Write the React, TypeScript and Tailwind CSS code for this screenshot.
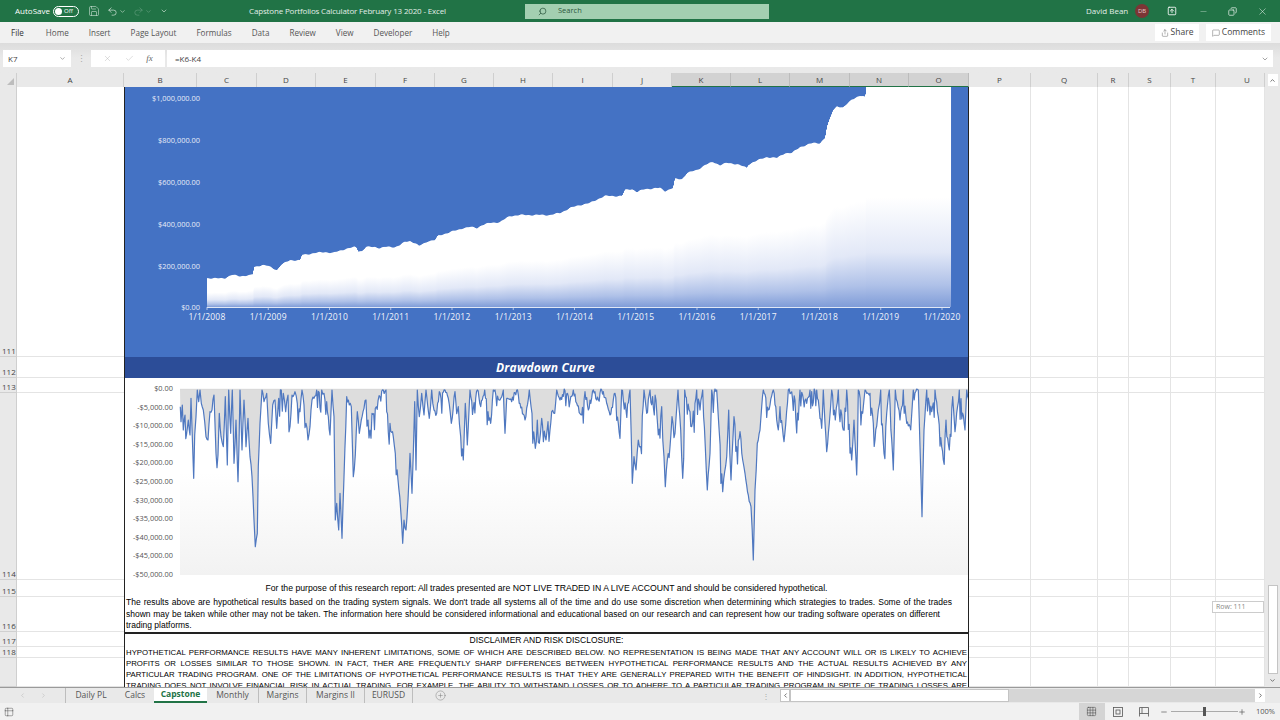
import React from 'react';
import { Save, Undo2, Redo2, ChevronDown, Search, X, Check, Minus, Plus, Share, MessageSquare, Grid3x3, CirclePlus, ChevronLeft, ChevronRight, ChevronUp, Copy, SquareArrowUp, Table2 } from 'lucide-react';

const uiFont = 'font-["Open_Sans","Liberation_Sans",sans-serif]';

const columns = [
  { name: 'A', w: 'w-[107px]' }, { name: 'B', w: 'w-[73px]' }, { name: 'C', w: 'w-[60px]' }, { name: 'D', w: 'w-[59px]' },
  { name: 'E', w: 'w-[60px]' }, { name: 'F', w: 'w-[59px]' }, { name: 'G', w: 'w-[59px]' }, { name: 'H', w: 'w-[59px]' },
  { name: 'I', w: 'w-[60px]' }, { name: 'J', w: 'w-[59px]' }, { name: 'K', w: 'w-[59px]', on: true }, { name: 'L', w: 'w-[59px]', on: true },
  { name: 'M', w: 'w-[60px]', on: true }, { name: 'N', w: 'w-[59px]', on: true }, { name: 'O', w: 'w-[60px]', on: true },
  { name: 'P', w: 'w-[62px]' }, { name: 'Q', w: 'w-[67px]' }, { name: 'R', w: 'w-[31px]' }, { name: 'S', w: 'w-[42px]' },
  { name: 'T', w: 'w-[45px]' }, { name: 'U', w: 'w-[49px] pl-[14px]' },
];

const rows = [
  { label: '111', h: 'h-[270px]' }, { label: '112', h: 'h-[21px]' }, { label: '113', h: 'h-[15px]' }, { label: '114', h: 'h-[187px]' },
  { label: '115', h: 'h-[17px]' }, { label: '116', h: 'h-[35px]' }, { label: '117', h: 'h-[15px]' }, { label: '118', h: 'h-[11px]' },
  { label: '', h: 'h-[29px]' },
];

const rightCols = columns.slice(15);

// equity curve outline, screen coordinates
const equity: [number, number][] = [
  [207, 278], [215, 278.5], [225, 278], [232, 275], [240, 276], [250, 275.5], [253, 274], [254, 267], [262, 265], [268, 266], [277, 270], [281, 265],
  [290, 260], [300, 260.5], [302, 255], [315, 253], [325, 252], [333, 253], [345, 249], [355, 247], [357, 248], [358, 251], [362, 251], [366, 247],
  [375, 247], [380, 248], [385, 247], [395, 247], [400, 245], [405, 242], [410, 241], [415, 243], [419, 246], [425, 243], [428, 241], [435, 240],
  [438, 236], [450, 232], [458, 230], [463, 228], [470, 227], [477, 228], [482, 225], [490, 223], [500, 222], [505, 219], [510, 216], [520, 215],
  [550, 215], [560, 213], [570, 208], [580, 205], [590, 203], [600, 198], [605, 196], [622, 196], [625, 190], [632, 189], [637, 192], [645, 189],
  [660, 188], [665, 191], [673, 188], [675, 179], [682, 179], [687, 173], [697, 170], [705, 165], [713, 162], [720, 165], [727, 163], [737, 164],
  [747, 168], [748, 165], [753, 162], [767, 157], [777, 158], [785, 153], [792, 153], [800, 147], [813, 143], [820, 143], [825, 138], [827, 127],
  [833, 110], [837, 106], [843, 108], [852, 99], [860, 96], [865, 97], [867, 87], [951, 87],
];

const equityAt = (x: number) => {
  for (let i = 1; i < equity.length; i++) {
    if (x <= equity[i][0]) {
      const [x0, y0] = equity[i - 1];
      const [x1, y1] = equity[i];
      const y = y0 + ((y1 - y0) * (x - x0)) / (x1 - x0);
      if (y < 90) return 87;
      // small roughness so the edge isn't perfectly smooth
      return y + 0.3 * Math.sin(x * 0.9) + 0.4 * Math.sin(x * 0.37);
    }
  }
  return 87;
};

// drawdown line, traced from the chart at 3x: left half then right half
const ddLeft = [
  181, 200, 183, 245, 187, 195, 190, 270, 195, 225, 200, 280, 205, 240, 210, 285, 213, 175, 217, 290, 221, 415, 224, 285, 228, 230, 232, 150, 236, 185, 240, 150,
  244, 190, 250, 210, 254, 245, 258, 290, 264, 300, 270, 215, 276, 210, 282, 165, 288, 340, 294, 345, 298, 220, 303, 290, 310, 320, 316, 170, 322, 375, 326, 150,
  332, 280, 337, 150, 342, 370, 348, 240, 354, 425, 360, 150, 366, 330, 372, 180, 378, 320, 384, 235, 390, 350, 396, 410, 402, 540, 406, 620, 412, 580, 415, 380,
  420, 250, 426, 150, 432, 185, 440, 160, 445, 250, 452, 310, 458, 195, 465, 180, 470, 265, 476, 175, 484, 150, 490, 160, 497, 215, 504, 165, 510, 260, 516, 165,
  525, 155, 532, 190, 540, 215, 546, 150, 552, 195, 558, 250, 564, 300, 570, 260, 576, 180, 582, 175, 590, 150, 605, 150, 612, 160, 620, 185, 630, 285, 636, 150,
  642, 230, 646, 540, 650, 490, 656, 570, 660, 460, 666, 595, 672, 410, 680, 170, 688, 195, 694, 200, 700, 410, 706, 345, 712, 215, 718, 280, 724, 240, 732, 205,
  738, 180, 744, 240, 750, 270, 756, 220, 766, 205, 780, 170, 790, 150, 798, 150, 800, 215, 810, 250, 820, 290, 826, 340, 834, 420, 842, 510, 848, 610, 852, 540,
  858, 570, 864, 480, 870, 340, 876, 460, 880, 340, 884, 185, 888, 390, 892, 150, 898, 230, 905, 160, 912, 225, 918, 150, 928, 235, 935, 150, 942, 210, 950, 220,
  958, 155, 975, 150, 985, 175, 994, 250, 1005, 155, 1015, 200, 1022, 290, 1030, 360, 1036, 190, 1042, 315, 1050, 150, 1060, 205, 1072, 150, 1082, 200, 1094, 150,
  1104, 215, 1112, 250, 1120, 150, 1140, 180, 1150, 150, 1155, 280, 1160, 175, 1175, 185, 1190, 150, 1200, 190, 1215, 240, 1228, 150, 1236, 220, 1246, 325, 1252, 240,
  1258, 310, 1265, 235, 1278, 300, 1284, 245,
];
const ddRight = [
  0, 270, 5, 215, 14, 220, 20, 150, 30, 180, 45, 152, 60, 185, 70, 150, 80, 190, 95, 225, 105, 155, 115, 210, 130, 150, 140, 180, 155, 150, 170, 190, 180, 225, 195, 160,
  205, 250, 210, 295, 215, 150, 228, 210, 240, 150, 247, 430, 252, 350, 258, 390, 265, 300, 272, 320, 282, 150, 290, 220, 300, 150, 318, 180, 325, 285, 335, 200, 342, 350,
  346, 440, 352, 360, 360, 320, 366, 230, 375, 280, 384, 150, 392, 270, 398, 415, 404, 150, 420, 215, 425, 260, 440, 150, 450, 210, 458, 150, 466, 320, 472, 450, 480, 340,
  485, 150, 500, 150, 505, 230, 518, 455, 524, 395, 530, 350, 536, 210, 543, 420, 552, 230, 560, 320, 570, 275, 578, 360, 585, 400, 595, 465, 603, 500, 610, 660, 615, 450,
  622, 310, 630, 270, 640, 150, 655, 210, 670, 150, 685, 270, 690, 200, 702, 305, 715, 150, 735, 180, 745, 240, 750, 150, 770, 190, 780, 150, 800, 150, 815, 265, 820, 150,
  830, 335, 838, 250, 845, 150, 856, 240, 865, 150, 880, 270, 890, 150, 905, 360, 912, 240, 920, 405, 925, 150, 938, 220, 945, 150, 960, 160, 975, 300, 985, 210, 992, 150,
  1002, 340, 1010, 220, 1018, 150, 1030, 390, 1036, 150, 1050, 240, 1060, 150, 1070, 250, 1082, 270, 1090, 150, 1105, 150, 1110, 320, 1116, 530, 1122, 270, 1130, 150, 1145, 215,
  1155, 150, 1165, 230, 1180, 360, 1188, 240, 1198, 330, 1208, 170, 1215, 275, 1228, 150, 1245, 270, 1250, 150, 1258, 200,
];

const ddPoints = () => {
  const raw: [number, number][] = [];
  for (let i = 0; i < ddLeft.length; i += 2) raw.push([120 + ddLeft[i] / 3, 340 + ddLeft[i + 1] / 3]);
  for (let i = 0; i < ddRight.length; i += 2) raw.push([550 + ddRight[i] / 3, 340 + ddRight[i + 1] / 3]);
  // add daily wiggle and short spikes between the traced points
  let seed = 7;
  const rnd = () => {
    seed = (seed * 16807) % 2147483647;
    return seed / 2147483647;
  };
  const pts: string[] = [];
  for (let i = 0; i < raw.length - 1; i++) {
    const [x0, y0] = raw[i];
    const [x1, y1] = raw[i + 1];
    const n = Math.max(1, Math.floor((x1 - x0) / 0.8));
    for (let j = 0; j < n; j++) {
      const t = j / n;
      let y = y0 + (y1 - y0) * t;
      if (j > 0) {
        y += (rnd() - 0.5) * 7;
        if (y < 470 && rnd() < 0.28) y += rnd() * 22;
      }
      pts.push(`${(x0 + (x1 - x0) * t).toFixed(1)},${Math.max(389, y).toFixed(1)}`);
    }
  }
  const last = raw[raw.length - 1];
  pts.push(`${last[0].toFixed(1)},${last[1].toFixed(1)}`);
  return pts.join(' ');
};

function EquityChart() {
  const xs: number[] = [];
  for (let x = 207; x < 951; x++) xs.push(x);
  const years = ['1/1/2008', '1/1/2009', '1/1/2010', '1/1/2011', '1/1/2012', '1/1/2013', '1/1/2014', '1/1/2015', '1/1/2016', '1/1/2017', '1/1/2018', '1/1/2019', '1/1/2020'];
  const money = [['$1,000,000.00', 98], ['$800,000.00', 140], ['$600,000.00', 182], ['$400,000.00', 223.5], ['$200,000.00', 265.5], ['$0.00', 307]] as const;
  return (
    <svg viewBox="125 87 843 270" className="block w-[843px] h-[270px] bg-[#4472c4]">
      <defs>
        <linearGradient id="eq" x1="0" y1="0" x2="0" y2="1">
          <stop offset="0" stopColor="#ffffff" />
          <stop offset="0.5" stopColor="#ffffff" />
          <stop offset="0.75" stopColor="#e2e8f7" />
          <stop offset="0.9" stopColor="#afc1e8" />
          <stop offset="1" stopColor="#7f9cd8" />
        </linearGradient>
      </defs>
      {xs.map((x) => {
        const y = equityAt(x + 0.5);
        return <rect key={x} x={x} y={y} width={1.02} height={307 - y} fill="url(#eq)" />;
      })}
      <line x1="207" y1="307.5" x2="950" y2="307.5" stroke="#dfe7f6" strokeWidth="1" />
      {years.map((y, i) => (
        <g key={y}>
          <line x1={207 + i * 61.25} y1="307" x2={207 + i * 61.25} y2="310" stroke="#dfe7f6" strokeWidth="0.7" />
          <text x={207 + i * 61.25} y="320" textAnchor="middle" fill="#f2f5fb" fontSize="8.5" fontFamily="Open Sans" letterSpacing="0.2">{y}</text>
        </g>
      ))}
      {money.map(([t, y]) => (
        <text key={t} x="200" y={y + 3} textAnchor="end" fill="#e6ecf8" fontSize="7.4" fontFamily="Open Sans">{t}</text>
      ))}
    </svg>
  );
}

function DrawdownChart() {
  const labels = ['$0.00', '-$5,000.00', '-$10,000.00', '-$15,000.00', '-$20,000.00', '-$25,000.00', '-$30,000.00', '-$35,000.00', '-$40,000.00', '-$45,000.00', '-$50,000.00'];
  const line = ddPoints();
  return (
    <svg viewBox="125 378 843 202" className="block w-[843px] h-[202px] bg-white">
      <defs>
        <linearGradient id="dd" x1="0" y1="0" x2="0" y2="1">
          <stop offset="0" stopColor="#ffffff" />
          <stop offset="0.45" stopColor="#ffffff" />
          <stop offset="1" stopColor="#f2f2f2" />
        </linearGradient>
      </defs>
      <rect x="180" y="389" width="788" height="186" fill="url(#dd)" />
      <polygon points={`180,389 ${line} 968,389`} fill="#dddddd" />
      <line x1="180" y1="389.3" x2="968" y2="389.3" stroke="#d6d6d6" strokeWidth="0.8" />
      <polyline points={line} fill="none" stroke="#4f78c0" strokeWidth="1.2" strokeLinejoin="round" />
      {labels.map((t, i) => (
        <text key={t} x="173" y={391 + i * 18.6} textAnchor="end" fill="#555" fontSize="7.4" fontFamily="Open Sans">{t}</text>
      ))}
    </svg>
  );
}

function TitleBar() {
  return (
    <div className={`h-[22px] bg-[#217346] flex items-center text-white text-[8px] shrink-0 ${uiFont}`}>
      <span className="ml-[15px] w-[38px]">AutoSave</span>
      <div className="w-[26px] h-[11px] rounded-full border border-white flex items-center pl-[1px] gap-[2px]">
        <div className="w-[7px] h-[7px] rounded-full bg-white" />
        <span className="text-[6px] leading-none">Off</span>
      </div>
      <Save size={12} strokeWidth={1.2} className="ml-[9px] text-[#cfe3d6]" />
      <Undo2 size={11} strokeWidth={1.4} className="ml-[7px] text-[#e4f0e8]" />
      <ChevronDown size={7} className="ml-[1px] text-[#cfe3d6]" />
      <Redo2 size={11} strokeWidth={1.2} className="ml-[7px] text-[#6ba384]" />
      <ChevronDown size={7} className="ml-[1px] text-[#6ba384]" />
      <ChevronDown size={8} className="ml-[8px] text-[#cfe3d6]" />
      <span className="ml-[81px] w-[276px] text-[#e2eee7] tracking-[-0.16px]">Capstone Portfolios Calculator February 13 2020  -  Excel</span>
      <div className="w-[244px] h-[15px] bg-[#a3cfb1] flex items-center text-[#2d5a40] text-[7.5px]">
        <Search size={9} className="ml-[13px] -scale-x-100" />
        <span className="ml-[11px]">Search</span>
      </div>
      <span className="ml-[317px] w-[44px] text-[8px] text-[#e2eee7]">David Bean</span>
      <div className="ml-[5px] w-[14px] h-[14px] rounded-full bg-[#7c3535] text-[6px] flex items-center justify-center text-[#e5caca]">DB</div>
      <SquareArrowUp size={10} className="ml-[18px]" />
      <Minus size={9} className="ml-[22px] text-[#7fb096]" />
      <Copy size={9} className="ml-[20px] -scale-x-100 text-[#e2eee7]" />
      <X size={11} strokeWidth={1.2} className="ml-[20px] text-[#e2eee7]" />
    </div>
  );
}

function RibbonTabs() {
  const tabs = ['File', 'Home', 'Insert', 'Page Layout', 'Formulas', 'Data', 'Review', 'View', 'Developer', 'Help'];
  return (
    <div className={`h-[21px] bg-[#f1f1f1] flex items-center text-[8.1px] text-[#555] shrink-0 ${uiFont}`}>
      <div className="flex gap-[20px] pl-[11px] pt-[1px]">
        {tabs.map((t) => (
          <span key={t} className={t === 'File' ? 'text-[#333] mr-[2px]' : ''}>{t}</span>
        ))}
      </div>
      <div className="ml-auto flex items-center gap-[7px] pr-[9px] text-[#444] text-[8.5px]">
        <div className="w-[44px] h-[17px] bg-white flex items-center justify-center gap-[2px]">
          <Share size={8} strokeWidth={1.2} />Share
        </div>
        <div className="w-[65px] h-[17px] bg-white flex items-center justify-center gap-[2px]">
          <MessageSquare size={8} strokeWidth={1.2} />Comments
        </div>
      </div>
    </div>
  );
}

function FormulaBar() {
  return (
    <div className={`h-[30px] pt-[7px] bg-gradient-to-b from-[#dcdcdc] via-[#e9e9e9] to-[#e9e9e9] flex items-start text-[8px] text-[#444] shrink-0 ${uiFont}`}>
      <div className="ml-[3px] w-[68px] h-[17px] bg-white flex items-center justify-between px-[5px]">
        <span>K7</span>
        <ChevronDown size={7} className="text-[#777]" />
      </div>
      <div className="w-[20px] h-[17px] flex items-center justify-center text-[#aaa] text-[9px]">⋮</div>
      <div className="w-[74px] h-[17px] bg-white flex items-center justify-around px-[6px] text-[#aaa]">
        <X size={9} strokeWidth={1} />
        <Check size={9} strokeWidth={1} />
        <span className="italic text-[#666] font-['Liberation_Serif',serif] text-[9px]">fx</span>
      </div>
      <div className="ml-[2px] w-[1106px] h-[17px] bg-white flex items-center pl-[8px] justify-between pr-[4px]">
        <span>=K6-K4</span>
        <ChevronDown size={8} className="text-[#777]" />
      </div>
    </div>
  );
}

function ColumnHeader() {
  return (
    <div className={`h-[14px] flex bg-[#e9e9e9] text-[8px] text-[#444] shrink-0 ${uiFont}`}>
      <div className="w-[17px] border-r border-[#cfcfcf] flex items-end justify-end p-[2px]">
        <div className="w-0 h-0 border-l-[7px] border-l-transparent border-b-[7px] border-b-[#bdbdbd]" />
      </div>
      {columns.map((c) => (
        <div key={c.name} className={`${c.w} flex items-center justify-center border-r ${c.on ? 'bg-[#d2d2d2] border-[#bcbcbc] border-b border-b-[#217346]' : 'border-[#cfcfcf]'}`}>{c.name}</div>
      ))}
      <div className="flex-1 flex items-center justify-center">
        <div className="w-[10px] h-[12px] bg-white flex items-center justify-center"><ChevronUp size={7} strokeWidth={3} className="text-[#666]" /></div>
      </div>
    </div>
  );
}

function Report() {
  return (
    <div className="w-[845px] shrink-0 border-x border-[#222] font-['Liberation_Sans',Arial,sans-serif] text-black bg-white">
      <EquityChart />
      <div className="h-[21px] bg-[#2c4d98] flex items-center justify-center text-white text-[12px] font-bold italic font-['Open_Sans',sans-serif] tracking-[0.2px] pr-[2px]">Drawdown Curve</div>
      <DrawdownChart />
      <div className="h-[17px] flex items-center justify-center text-[8.7px]">For the purpose of this research report: All trades presented are NOT LIVE TRADED IN A LIVE ACCOUNT and should be considered hypothetical.</div>
      <div className="h-[35px] pl-[1px] pr-[16px] text-[8.5px] leading-[11.5px]">
        <div className="[text-align-last:justify]">The results above are hypothetical results based on the trading system signals. We don't trade all systems all of the time and do use some discretion when determining which strategies to trades. Some of the trades</div>
        <div className="pr-[12px] [text-align-last:justify]">shown may be taken while other may not be taken. The information here should be considered informational and educational based on our research and can represent how our trading software operates on different</div>
        <div>trading platforms.</div>
      </div>
      <div className="border-t-2 border-[#222] h-[15px] flex items-center justify-center text-[8.5px]">DISCLAIMER AND RISK DISCLOSURE:</div>
      <div className="px-[1px] text-[7.8px] leading-[11px]">
        <div className="[text-align-last:justify]">HYPOTHETICAL PERFORMANCE RESULTS HAVE MANY INHERENT LIMITATIONS, SOME OF WHICH ARE DESCRIBED BELOW.  NO REPRESENTATION IS BEING MADE THAT ANY ACCOUNT WILL OR IS LIKELY TO ACHIEVE</div>
        <div className="[text-align-last:justify]">PROFITS OR LOSSES SIMILAR TO THOSE SHOWN.  IN FACT, THER ARE FREQUENTLY SHARP DIFFERENCES BETWEEN HYPOTHETICAL PERFORMANCE RESULTS AND THE ACTUAL RESULTS ACHIEVED BY ANY</div>
        <div className="[text-align-last:justify]">PARTICULAR TRADING PROGRAM.  ONE OF THE LIMITATIONS OF HYPOTHETICAL PERFORMANCE RESULTS IS THAT THEY ARE GENERALLY PREPARED WITH THE BENEFIT OF HINDSIGHT.  IN ADDITION, HYPOTHETICAL</div>
        <div className="[text-align-last:justify]">TRADING DOES NOT INVOLVE FINANCIAL RISK IN ACTUAL TRADING.  FOR EXAMPLE, THE ABILITY TO WITHSTAND LOSSES OR TO ADHERE TO A PARTICULAR TRADING PROGRAM IN SPITE OF TRADING LOSSES ARE</div>
      </div>
    </div>
  );
}

function Sheet() {
  return (
    <div className="h-[600px] shrink-0 flex overflow-hidden relative bg-white">
      <div className={`w-[17px] shrink-0 bg-[#e9e9e9] border-r border-[#cfcfcf] text-[8px] text-[#444] ${uiFont}`}>
        {rows.map((r, i) => (
          <div key={i} className={`${r.h} flex items-end pl-[2px] border-b border-[#d0d0d0] leading-[11px]`}>{r.label}</div>
        ))}
      </div>
      <div className="w-[107px] shrink-0">
        {rows.map((r, i) => (
          <div key={i} className={`${r.h} border-b border-[#e4e4e4]`} />
        ))}
      </div>
      <Report />
      <div className="w-[296px] shrink-0">
        {rows.map((r, i) => (
          <div key={i} className={`${r.h} flex border-b border-[#e4e4e4]`}>
            {rightCols.map((c) => (
              <div key={c.name} className={`${c.w} border-r border-[#e4e4e4]`} />
            ))}
          </div>
        ))}
      </div>
      <div className="flex-1 bg-[#e9e9e9] flex flex-col items-center">
        <div className="flex-1" />
        <div className="w-[10px] h-[89px] bg-white border border-[#c4c4c4]" />
        <div className="h-[13px] flex items-center"><ChevronDown size={7} strokeWidth={3} className="text-[#666]" /></div>
      </div>
      <div className={`absolute left-[1212px] top-[514px] w-[52px] h-[12px] bg-white border border-[#cccccc] text-[7px] text-[#888] flex items-center pl-[3px] ${uiFont}`}>Row: 111</div>
    </div>
  );
}

function SheetTabs() {
  const tabs = [['Daily PL', 'w-[51px]'], ['Calcs', 'w-[37px]'], ['Capstone', 'w-[53px]'], ['Monthly', 'w-[52px]'], ['Margins', 'w-[48px]'], ['Margins II', 'w-[58px]'], ['EURUSD', 'w-[48px]']];
  return (
    <div className={`h-[16px] shrink-0 bg-[#e9e9e9] border-t border-[#9a9a9a] flex items-stretch text-[8.5px] text-[#555] ${uiFont}`}>
      <div className="w-[66px] flex items-center justify-center gap-[14px] text-[#bbb] border-r border-[#bdbdbd]">
        <ChevronLeft size={7} /><ChevronRight size={7} />
      </div>
      {tabs.map(([t, w]) => (
        <div key={t} className={`${w} flex items-center justify-center ${t === 'Capstone' ? 'bg-white text-[#217346] font-bold border-b-2 border-[#217346]' : t === 'Daily PL' || t === 'Calcs' ? 'border-r border-transparent' : 'border-r border-[#bdbdbd]'}`}>{t}</div>
      ))}
      <div className="ml-[22px] flex items-center"><CirclePlus size={11} strokeWidth={1} className="text-[#777]" /></div>
      <div className="ml-[316px] flex items-center text-[#aaa] text-[8px]">⋮</div>
      <div className="ml-[10px] w-[485px] flex items-center bg-[#d6d6d6] my-[1px]">
        <div className="w-[10px] h-full bg-white border border-[#c4c4c4] flex items-center justify-center"><ChevronLeft size={7} strokeWidth={3} className="text-[#666]" /></div>
        <div className="w-[219px] h-full bg-white border border-[#c4c4c4]" />
        <div className="ml-auto w-[10px] h-full bg-white flex items-center justify-center"><ChevronRight size={7} strokeWidth={3} className="text-[#666]" /></div>
      </div>
    </div>
  );
}

function PageLayoutIcon() {
  return (
    <svg width="10" height="10" viewBox="0 0 10 10" className="ml-[8px]" fill="none" stroke="#555" strokeWidth="0.8">
      <rect x="0.5" y="0.5" width="9" height="9" />
      <rect x="3" y="3" width="4" height="4" />
    </svg>
  );
}

function PageBreakIcon() {
  return (
    <svg width="10" height="10" viewBox="0 0 10 10" className="ml-[16px]" fill="none" stroke="#555" strokeWidth="0.8">
      <path d="M0.5 9.5V0.5H9.5V9.5M0.5 6.5H9.5M3 0.5V6.5" />
    </svg>
  );
}

function StatusBar() {
  return (
    <div className={`h-[17px] shrink-0 bg-[#f1f1f1] flex items-center text-[#555] ${uiFont}`}>
      <Table2 size={10} strokeWidth={1.2} className="ml-[4px]" />
      <div className="ml-auto h-full w-[26px] bg-[#d4d4d4] flex items-center justify-center"><Grid3x3 size={11} strokeWidth={1} className="text-[#333]" /></div>
      <PageLayoutIcon />
      <PageBreakIcon />
      <Minus size={8} className="ml-[11px]" />
      <div className="ml-[3px] w-[67px] h-[1px] bg-[#aaa] flex items-center pl-[32px]">
        <div className="w-[3px] h-[9px] bg-[#555]" />
      </div>
      <Plus size={8} />
      <span className="ml-[10px] mr-[5px] text-[7.5px]">100%</span>
    </div>
  );
}

export default function App() {
  return (
    <div className="w-[1280px] h-[720px] flex flex-col overflow-hidden bg-white">
      <TitleBar />
      <RibbonTabs />
      <FormulaBar />
      <ColumnHeader />
      <Sheet />
      <SheetTabs />
      <StatusBar />
    </div>
  );
}
